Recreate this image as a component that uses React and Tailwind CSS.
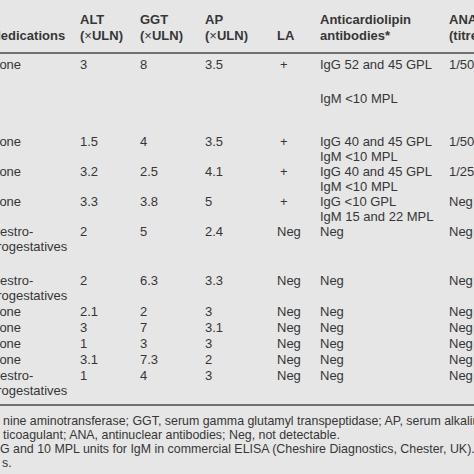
import React from "react";

const cols = "grid grid-cols-[90px_60px_65px_72px_43px_129px_80px]";

const rows = [
  { med: ["None"], alt: "3", ggt: "8", ap: "3.5", la: "+", acl: ["IgG 52 and 45 GPL", "IgM <10 MPL"], ana: "1/50", spaced: true, mt: "mt-[3px]" },
  { med: ["None"], alt: "1.5", ggt: "4", ap: "3.5", la: "+", acl: ["IgG 40 and 45 GPL", "IgM <10 MPL"], ana: "1/50", mt: "mt-[28px]" },
  { med: ["None"], alt: "3.2", ggt: "2.5", ap: "4.1", la: "+", acl: ["IgG 40 and 45 GPL", "IgM <10 MPL"], ana: "1/250", mt: "mt-0" },
  { med: ["None"], alt: "3.3", ggt: "3.8", ap: "5", la: "+", acl: ["IgG <10 GPL", "IgM 15 and 22 MPL"], ana: "Neg", mt: "mt-0" },
  { med: ["Oestro-", "progestatives"], alt: "2", ggt: "5", ap: "2.4", la: "Neg", acl: ["Neg"], ana: "Neg", mt: "mt-0" },
  { med: ["Oestro-", "progestatives"], alt: "2", ggt: "6.3", ap: "3.3", la: "Neg", acl: ["Neg"], ana: "Neg", mt: "mt-[19px]" },
  { med: ["None"], alt: "2.1", ggt: "2", ap: "3", la: "Neg", acl: ["Neg"], ana: "Neg", mt: "mt-[1px]" },
  { med: ["None"], alt: "3", ggt: "7", ap: "3.1", la: "Neg", acl: ["Neg"], ana: "Neg", mt: "mt-[1px]" },
  { med: ["None"], alt: "1", ggt: "3", ap: "3", la: "Neg", acl: ["Neg"], ana: "Neg", mt: "mt-[1px]" },
  { med: ["None"], alt: "3.1", ggt: "7.3", ap: "2", la: "Neg", acl: ["Neg"], ana: "Neg", mt: "mt-[1px]" },
  { med: ["Oestro-", "progestatives"], alt: "1", ggt: "4", ap: "3", la: "Neg", acl: ["Neg"], ana: "Neg", mt: "mt-[1px]" },
];

function Header() {
  return (
    <div className={`${cols} items-end pt-[12px] pb-[8px] font-bold leading-[16px]`}>
      <div>Medications</div>
      <div>
        ALT
        <br />
        (<span className="font-normal">×</span>ULN)
      </div>
      <div>
        GGT
        <br />
        (<span className="font-normal">×</span>ULN)
      </div>
      <div>
        AP
        <br />
        (<span className="font-normal">×</span>ULN)
      </div>
      <div>LA</div>
      <div>
        Anticardiolipin
        <br />
        antibodies*
      </div>
      <div>
        ANA
        <br />
        (titre)
      </div>
    </div>
  );
}

export default function App() {
  return (
    <div
      className="w-[474px] h-[474px] overflow-hidden bg-[#e6e6e6] text-[#363636]"
      style={{ fontFamily: '"Liberation Sans", Arial, sans-serif' }}
    >
      <div className="ml-[-10px] w-[560px] text-[13px]">
        <Header />
        <div className="border-t-2 border-[#707070]" />
        <div className="leading-[15px] pb-[6px]">
          {rows.map((r, i) => (
            <div key={i} className={`${cols} ${r.mt}`}>
              <div>
                {r.med.map((m) => (
                  <div key={m}>{m}</div>
                ))}
              </div>
              <div>{r.alt}</div>
              <div>{r.ggt}</div>
              <div>{r.ap}</div>
              <div className={r.la === "+" ? "pl-[3px]" : ""}>{r.la}</div>
              <div className={r.spaced ? "flex flex-col gap-[19px]" : ""}>
                {r.acl.map((a) => (
                  <div key={a}>{a}</div>
                ))}
              </div>
              <div>{r.ana}</div>
            </div>
          ))}
        </div>
        <div className="border-t-2 border-[#707070]" />
      </div>
      <div className="mt-[8px] text-[12.4px] leading-[14px] whitespace-nowrap">
        <div className="pl-[3px]">nine aminotransferase; GGT, serum gamma glutamyl transpeptidase; AP, serum alkaline phosphatase</div>
        <div className="pl-[3px]">ticoagulant; ANA, antinuclear antibodies; Neg, not detectable.</div>
        <div>G and 10 MPL units for IgM in commercial ELISA (Cheshire Diagnostics, Chester, UK). Test</div>
        <div className="pl-[2px]">s.</div>
      </div>
    </div>
  );
}
